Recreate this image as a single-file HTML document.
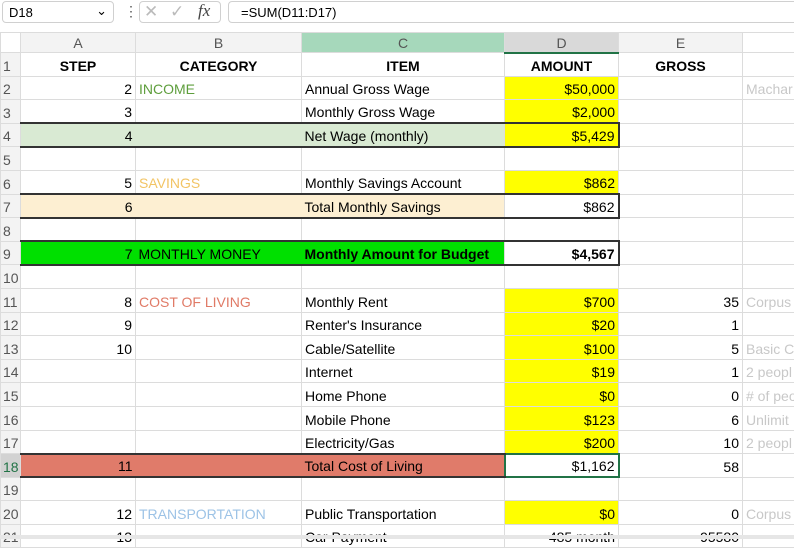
<!DOCTYPE html>
<html><head><meta charset="utf-8"><style>
*{box-sizing:border-box;margin:0;padding:0}
body{width:794px;height:539px;overflow:hidden;background:#fff;font-family:"Liberation Sans",Arial,sans-serif;position:relative}
.fb{position:absolute;left:0;top:0;width:794px;height:32px;background:#fff}
.nb{position:absolute;left:2px;top:1px;width:112px;height:22px;border:1px solid #d0d0d0;border-radius:4px;font-size:13px;padding:3px 6px}
.nb span{position:absolute;right:6px;top:1px;font-size:13px}
.ic{position:absolute;left:139px;top:1px;width:82px;height:22px;border:1px solid #d0d0d0;border-radius:4px;color:#bbb;font-size:17px}
.fx{position:absolute;left:228px;top:1px;width:580px;height:22px;border:1px solid #d0d0d0;border-radius:4px;font-size:13px;padding:3px 12px}
table{position:absolute;left:0;top:32px;width:802px;border-collapse:collapse;table-layout:fixed;font-size:14px}
td{height:23.6px;border:1px solid #dcdcdc;white-space:nowrap;overflow:hidden;padding:0 3px;line-height:20px;vertical-align:bottom}
tr.h td{height:20px;background:#f3f3f3;color:#555;text-align:center;font-size:14px;line-height:18px;border-color:#dcdcdc}
td.rh{background:#f3f3f3;color:#555;text-align:left;padding-left:2px;font-size:14px}
.r{text-align:right}.c{text-align:center}.b{font-weight:bold}
.y{background:#ffff00}
.g{color:#c8c8c8}
.t{border-top:2px solid #333;border-bottom:2px solid #333}
.nl{border-left:none}.nr{border-right:none}
</style></head><body>
<div class="fb">
<div class="nb">D18<span>&#8964;</span></div>
<div style="position:absolute;left:124px;top:3px;font-size:14px;color:#555">&#8942;</div>
<div class="ic"><span style="position:absolute;left:4px;top:0">&#10005;</span><span style="position:absolute;left:30px;top:0">&#10003;</span><span style="position:absolute;left:58px;top:-1px;color:#444;font-family:'Liberation Serif',serif;font-style:italic">fx</span></div>
<div class="fx">=SUM(D11:D17)</div>
</div>
<table>
<colgroup><col style="width:20px"><col style="width:115px"><col style="width:166px"><col style="width:203px"><col style="width:114px"><col style="width:124px"><col style="width:60px"></colgroup>
<tr class="h"><td style="background:#fff"></td><td>A</td><td>B</td><td style="background:#a6d8bb">C</td><td style="background:#d9d9d9;border-bottom:2px solid #217346">D</td><td>E</td><td style="background:#fff"></td></tr>
<tr><td class="rh">1</td><td class="c b">STEP</td><td class="c b">CATEGORY</td><td class="c b">ITEM</td><td class="c b">AMOUNT</td><td class="c b">GROSS</td><td></td></tr>
<tr><td class="rh">2</td><td class="r">2</td><td style="color:#5e9e3c">INCOME</td><td>Annual Gross Wage</td><td class="r y">$50,000</td><td></td><td class="g">Machar</td></tr>
<tr><td class="rh">3</td><td class="r">3</td><td></td><td>Monthly Gross Wage</td><td class="r y">$2,000</td><td></td><td></td></tr>
<tr><td class="rh">4</td><td class="r t nr" style="background:#d9ead3">4</td><td class="t nl nr" style="background:#d9ead3"></td><td class="t nl" style="background:#d9ead3">Net Wage (monthly)</td><td class="r y t" style="border-right:2px solid #333">$5,429</td><td></td><td></td></tr>
<tr><td class="rh">5</td><td></td><td></td><td></td><td></td><td></td><td></td></tr>
<tr><td class="rh">6</td><td class="r">5</td><td style="color:#f2c464">SAVINGS</td><td>Monthly Savings Account</td><td class="r y">$862</td><td></td><td></td></tr>
<tr><td class="rh">7</td><td class="r t nr" style="background:#fdefd2">6</td><td class="t nl nr" style="background:#fdefd2"></td><td class="t nl" style="background:#fdefd2">Total Monthly Savings</td><td class="r t" style="border-right:2px solid #333">$862</td><td></td><td></td></tr>
<tr><td class="rh">8</td><td></td><td></td><td></td><td></td><td></td><td></td></tr>
<tr><td class="rh">9</td><td class="r t nr" style="background:#00e000">7</td><td class="t nl nr" style="background:#00e000">MONTHLY MONEY</td><td class="b t nl" style="background:#00e000">Monthly Amount for Budget</td><td class="r b t" style="border-right:2px solid #333">$4,567</td><td></td><td></td></tr>
<tr><td class="rh">10</td><td></td><td></td><td></td><td></td><td></td><td></td></tr>
<tr><td class="rh">11</td><td class="r">8</td><td style="color:#e07a66">COST OF LIVING</td><td>Monthly Rent</td><td class="r y">$700</td><td class="r">35</td><td class="g">Corpus</td></tr>
<tr><td class="rh">12</td><td class="r">9</td><td></td><td>Renter's Insurance</td><td class="r y">$20</td><td class="r">1</td><td></td></tr>
<tr><td class="rh">13</td><td class="r">10</td><td></td><td>Cable/Satellite</td><td class="r y">$100</td><td class="r">5</td><td class="g">Basic C</td></tr>
<tr><td class="rh">14</td><td></td><td></td><td>Internet</td><td class="r y">$19</td><td class="r">1</td><td class="g">2 peopl</td></tr>
<tr><td class="rh">15</td><td></td><td></td><td>Home Phone</td><td class="r y">$0</td><td class="r">0</td><td class="g"># of peo</td></tr>
<tr><td class="rh">16</td><td></td><td></td><td>Mobile Phone</td><td class="r y">$123</td><td class="r">6</td><td class="g">Unlimit</td></tr>
<tr><td class="rh">17</td><td></td><td></td><td>Electricity/Gas</td><td class="r y">$200</td><td class="r">10</td><td class="g">2 peopl</td></tr>
<tr><td class="rh" style="background:#d2d2d2;color:#217346">18</td><td class="r t nr" style="background:#e07b6a">11</td><td class="t nl nr" style="background:#e07b6a"></td><td class="t nl" style="background:#e07b6a">Total Cost of Living</td><td class="r" style="border:2px solid #217346">$1,162</td><td class="r">58</td><td></td></tr>
<tr><td class="rh">19</td><td></td><td></td><td></td><td></td><td></td><td></td></tr>
<tr><td class="rh">20</td><td class="r">12</td><td style="color:#9dc3e6">TRANSPORTATION</td><td>Public Transportation</td><td class="r y">$0</td><td class="r">0</td><td class="g">Corpus</td></tr>
<tr><td class="rh">21</td><td class="r">13</td><td></td><td>Car Payment</td><td class="r">485 month</td><td class="r">95580</td><td></td></tr>
</table>
<div style="position:absolute;left:0;top:535px;width:794px;height:4px;background:#e6e6e6"></div>
</body></html>
